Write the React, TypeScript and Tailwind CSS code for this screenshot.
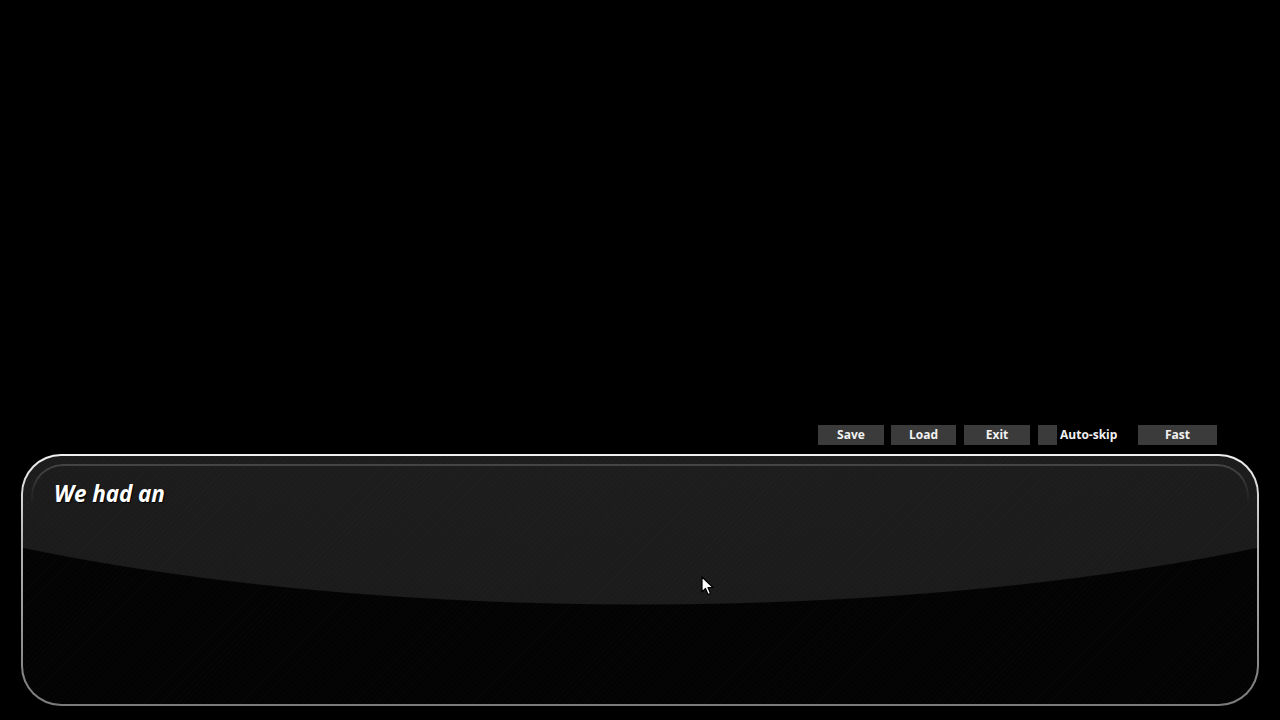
const buttons = [
  { label: 'Save', w: 'w-[66px]', mr: 'mr-[7px]' },
  { label: 'Load', w: 'w-[65px]', mr: 'mr-[8px]' },
  { label: 'Exit', w: 'w-[66px]', mr: 'mr-[8px]' },
];

function Cursor() {
  return (
    <svg className="absolute left-[678px] top-[120px]" width="14" height="21" viewBox="0 0 14 21">
      <path d="M1 1 L1 16 L4.5 12.5 L7 18.5 L9.5 17.5 L7 11.5 L12 11.5 Z" fill="#fff" stroke="#000" strokeWidth="1.2" strokeLinejoin="round" />
    </svg>
  );
}

export default function App() {
  return (
    <div className="flex h-[720px] w-[1280px] flex-col justify-end bg-black font-['Open_Sans',sans-serif]">
      <div className="mb-[9px] flex items-center justify-end pr-[63px] text-[12px] font-bold text-[#f2f2f2]">
        {buttons.map((b) => (
          <div key={b.label} className={`${b.w} ${b.mr} flex h-[20px] items-center justify-center bg-[#3b3b3b]`}>
            {b.label}
          </div>
        ))}
        <div className="h-[20px] w-[19px] bg-[#3b3b3b]" />
        <span className="ml-[3px] mr-[19px] w-[59px] whitespace-nowrap">Auto-skip</span>
        <div className="flex h-[20px] w-[79px] items-center justify-center bg-[#3b3b3b]">Fast</div>
      </div>

      <div className="mx-[21px] mb-[14px] h-[252px] rounded-[40px] bg-[linear-gradient(to_bottom,#f0f0f0_0%,#b5b5b5_35%,#7a7a7a_100%)] p-[2px]">
        <div className="relative h-full overflow-hidden rounded-[38px] bg-[radial-gradient(ellipse_1000px_265px_at_50%_-116px,#1f1f1f_0%,#1b1b1b_99.6%,#030303_100%)]">
          <div className="absolute inset-0 bg-[repeating-linear-gradient(135deg,rgba(255,255,255,0.012)_0px,rgba(255,255,255,0.012)_1px,transparent_1px,transparent_4px)]" />
          <div className="absolute left-[8px] right-[8px] top-[8px] h-[40px] rounded-t-[32px] border-x-2 border-t-2 border-[#444] [mask-image:linear-gradient(to_bottom,black_15%,transparent)]" />
          <p className="relative pl-[31px] pt-[21px] text-[22.5px] font-bold italic tracking-[-0.1px] text-white [text-shadow:1px_1px_1px_#000]">
            We had an
          </p>
          <Cursor />
        </div>
      </div>
    </div>
  );
}
